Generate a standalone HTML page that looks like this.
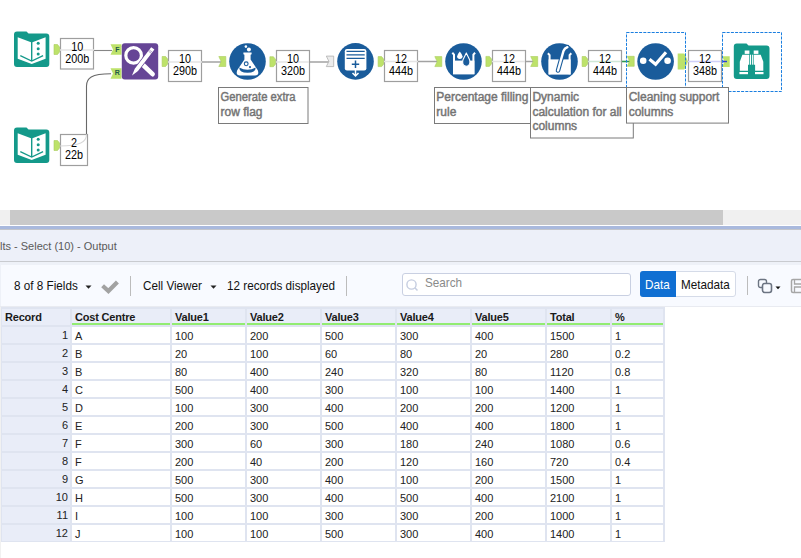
<!DOCTYPE html>
<html><head><meta charset="utf-8">
<style>
*{margin:0;padding:0;box-sizing:border-box}
html,body{width:801px;height:558px;overflow:hidden;background:#fff;font-family:"Liberation Sans",sans-serif;position:relative}
.a{position:absolute}
.tg{position:absolute;background:#dfe4f0}
.hc{position:absolute;height:16px;letter-spacing:-0.2px;background:#e9edf8;font-weight:bold;font-size:11px;color:#1a1a1a;padding-left:3px;line-height:16px;white-space:nowrap;overflow:hidden}
.gl{position:absolute;height:2px;background:#92ec72}
.rc{position:absolute;height:16px;background:#e9edf8;font-size:11px;color:#222;text-align:right;padding-right:2px;line-height:17px}
.tb{font-size:13px;transform:scaleX(0.9);transform-origin:0 0;color:#111;white-space:nowrap;line-height:14px}
.dc{position:absolute;height:16px;background:#fff;font-size:11px;color:#222;padding-left:3px;line-height:19px}
</style></head><body>
<svg class="a" style="left:0;top:0" width="801" height="210" viewBox="0 0 801 210">

<!-- connection lines -->
<path d="M94,50.5H112" stroke="#868686" stroke-width="1.1" fill="none"/>
<path d="M86.5,135V86C86.5,78 91,73.8 111,73.8" stroke="#686868" stroke-width="1.1" fill="none"/>
<g stroke="#a2a2a2" stroke-width="1.5" fill="none">
  <path d="M202,62H221"/>
  <path d="M309.5,62H329"/>
  <path d="M418,61.5H437"/>
  <path d="M525.5,61.5H533"/>
</g>
<path d="M621.5,61.5H630" stroke="#2e9a50" stroke-width="1.6"/>
<path d="M721.5,61.5H727" stroke="#3040d8" stroke-width="1.6"/>
<!-- input 1 -->
<g>
<path d="M14,34.5Q14,31.5 17,31.5H26.5L28.5,33.5H46.3Q49.3,33.5 49.3,36.5V64Q49.3,67 46.3,67H17Q14,67 14,64Z" fill="#14998a"/>
<path d="M17.7,37.2L31,42.3H32.4L45.6,37.2V58.7L31.7,64.1L17.7,58.7Z" fill="#fff"/>
<path d="M31.7,42V61" stroke="#14998a" stroke-width="1.4"/>
<path d="M20.3,55.6L31.7,61L43.1,55.6" stroke="#14998a" stroke-width="1.3" fill="none"/>
<circle cx="38.2" cy="43.3" r="1.5" fill="#14998a"/><circle cx="38.2" cy="48.7" r="1.5" fill="#14998a"/><circle cx="38.2" cy="54.1" r="1.5" fill="#14998a"/>
</g>
<g transform="translate(0,96)">
<path d="M14,34.5Q14,31.5 17,31.5H26.5L28.5,33.5H46.3Q49.3,33.5 49.3,36.5V64Q49.3,67 46.3,67H17Q14,67 14,64Z" fill="#14998a"/>
<path d="M17.7,37.2L31,42.3H32.4L45.6,37.2V58.7L31.7,64.1L17.7,58.7Z" fill="#fff"/>
<path d="M31.7,42V61" stroke="#14998a" stroke-width="1.4"/>
<path d="M20.3,55.6L31.7,61L43.1,55.6" stroke="#14998a" stroke-width="1.3" fill="none"/>
<circle cx="38.2" cy="43.3" r="1.5" fill="#14998a"/><circle cx="38.2" cy="48.7" r="1.5" fill="#14998a"/><circle cx="38.2" cy="54.1" r="1.5" fill="#14998a"/>
</g>
<g transform="translate(53.7,44.2)"><path d="M0.3,0.3H3.8L6,3V7.6L3.8,10.3H0.3Z" fill="#bde26a" stroke="#a9cd5e" stroke-width="0.6"/></g>
<g transform="translate(53.7,140.2)"><path d="M0.3,0.3H3.8L6,3V7.6L3.8,10.3H0.3Z" fill="#bde26a" stroke="#a9cd5e" stroke-width="0.6"/></g>

<!-- F / R anchors -->
<path d="M110.5,44.2H121.5V54.8H110.5L113,49.5Z" fill="#bde26a"/>
<path d="M110.5,68.2H121.5V78.8H110.5L113,73.5Z" fill="#bde26a"/>
<text x="117.3" y="52.2" font-family="Liberation Sans" font-weight="bold" font-size="7" fill="#1f5a48" text-anchor="middle">F</text>
<text x="117.3" y="75.2" font-family="Liberation Sans" font-weight="bold" font-size="7" fill="#1f5a48" text-anchor="middle">R</text>

<!-- select tool -->
<rect x="121.8" y="43.2" width="36.4" height="36.3" rx="3" fill="#664596"/>
<circle cx="133.6" cy="55.4" r="7.8" stroke="#fff" stroke-width="3.2" fill="none"/>
<path d="M140.5,62.5L152.6,74.2" stroke="#fff" stroke-width="4.6" stroke-linecap="round"/>
<path d="M154.4,49.6L151.2,47.2L134.8,68.7L132,75.6L138,71.1Z" fill="#fff" stroke="#664596" stroke-width="1.3" stroke-linejoin="round"/>
<path d="M154.4,49.6L151.2,47.2L134.8,68.7L132,75.6L138,71.1Z" fill="#fff"/>
<path d="M149.3,50L152.6,52.5M148.5,51.2L151.8,53.7" stroke="#664596" stroke-width="0.55"/>
<g transform="translate(161.8,56.2)"><path d="M0.3,0.3H3.8L6,3V7.6L3.8,10.3H0.3Z" fill="#bde26a" stroke="#a9cd5e" stroke-width="0.6"/></g>

<!-- formula -->
<g transform="translate(218.5,56.2)"><path d="M0.3,0.3H7.3V10.3H0.3L2.7,5.3Z" fill="#bde26a" stroke="#a9cd5e" stroke-width="0.6"/></g>
<circle cx="247.5" cy="61.5" r="18.3" fill="#1a5c9b"/>
<path d="M243.4,52.6H251.6V54.3L250.6,54.8V59.5L257.8,70.3Q259.6,75.6 255,75.6H240Q235.4,75.6 237.2,70.3L244.4,59.5V54.8L243.4,54.3Z" fill="#fff"/>
<path d="M239.2,67.4Q247.5,72 255.7,67.4Q255.6,72.8 247.5,72.8Q239.4,72.8 239.2,67.4Z" fill="#1a5c9b"/>
<circle cx="246.2" cy="63.8" r="1.9" stroke="#1a5c9b" stroke-width="1.1" fill="none"/>
<circle cx="250" cy="67.1" r="1.1" fill="#1a5c9b"/>
<circle cx="245.9" cy="46.6" r="1.3" fill="#fff"/>
<circle cx="248.9" cy="49.5" r="2" fill="#fff"/>
<g transform="translate(269.6,56.4)"><path d="M0.3,0.3H3.8L6,3V7.6L3.8,10.3H0.3Z" fill="#bde26a" stroke="#a9cd5e" stroke-width="0.6"/></g>

<!-- record id -->
<path d="M326.3,56.1H333.7V66.6H326.3L328.9,61.35Z" fill="#ececec" stroke="#b0b0b0" stroke-width="0.8"/>
<circle cx="355.5" cy="61.4" r="18.3" fill="#1a5c9b"/>
<rect x="344.8" y="49" width="21.6" height="21.4" rx="2.2" fill="#fff"/>
<g stroke="#1a5c9b" stroke-width="1.3"><path d="M346.5,51.3H364.7M346.5,54.8H364.7M346.5,58.4H364.7"/></g>
<path d="M355.5,60.6V68M351.8,64.3H359.2" stroke="#1a5c9b" stroke-width="1.5"/>
<path d="M355.5,70V76M352.5,73L355.5,76L358.5,73" stroke="#fff" stroke-width="1.5" fill="none"/>
<g transform="translate(377.8,56.3)"><path d="M0.3,0.3H3.8L6,3V7.6L3.8,10.3H0.3Z" fill="#bde26a" stroke="#a9cd5e" stroke-width="0.6"/></g>

<!-- percentage filling -->
<g transform="translate(434.5,56.3)"><path d="M0.3,0.3H7.3V10.3H0.3L2.7,5.3Z" fill="#bde26a" stroke="#a9cd5e" stroke-width="0.6"/></g>
<circle cx="463.5" cy="61.5" r="18.3" fill="#1a5c9b"/>
<path d="M452.3,52.8L454,54.6V74M475.1,52.8L473.4,54.6V74" stroke="#fff" stroke-width="2" fill="none"/>
<rect x="453" y="60.6" width="21.4" height="13.8" fill="#fff"/>
<path d="M459.8,51.4Q462.5,54.6 462.5,56.3A2.7,2.7 0 0 1 457.1,56.3Q457.1,54.6 459.8,51.4Z" fill="#fff"/>
<path d="M466.3,52.9L469.6,59.8Q470,61 469.9,62.6A3.6,3.6 0 0 1 462.7,62.6Q462.6,61 463,59.8Z" fill="#1a5c9b" stroke="#fff" stroke-width="1.1" stroke-linejoin="round"/>
<g transform="translate(485.6,56.1)"><path d="M0.3,0.3H3.8L6,3V7.6L3.8,10.3H0.3Z" fill="#bde26a" stroke="#a9cd5e" stroke-width="0.6"/></g>

<!-- dynamic calc -->
<g transform="translate(530.4,56.2)"><path d="M0.3,0.3H7.3V10.3H0.3L2.7,5.3Z" fill="#bde26a" stroke="#a9cd5e" stroke-width="0.6"/></g>
<circle cx="559.5" cy="61.5" r="18.3" fill="#1a5c9b"/>
<path d="M547.9,53.3L549.6,55.1V74.2M571.3,53.3L569.6,55.1V74.2" stroke="#fff" stroke-width="2" fill="none"/>
<rect x="548.6" y="59.4" width="22" height="15.2" fill="#fff"/>
<path d="M567.4,47.2Q564.5,48.5 563.5,51L558,70.5" stroke="#1a5c9b" stroke-width="4.6" fill="none" stroke-linecap="round"/>
<path d="M567.4,47.2Q564.5,48.5 563.5,51L558,70.5" stroke="#fff" stroke-width="2.4" fill="none" stroke-linecap="round"/>
<g transform="translate(581.8,56.2)"><path d="M0.3,0.3H3.8L6,3V7.6L3.8,10.3H0.3Z" fill="#bde26a" stroke="#a9cd5e" stroke-width="0.6"/></g>

<!-- cleaning -->
<g transform="translate(626.9,56)"><path d="M0.3,0.3H7.3V10.3H0.3L2.7,5.3Z" fill="#bde26a" stroke="#a9cd5e" stroke-width="0.6"/></g>
<circle cx="655.6" cy="61.5" r="18.3" fill="#1a5c9b"/>
<circle cx="643.2" cy="60.7" r="3.3" fill="#fff"/>
<circle cx="667.6" cy="60.7" r="3.3" fill="#fff"/>
<path d="M649.5,59.3L655.6,64.2L666,52.3" stroke="#fff" stroke-width="3.2" fill="none"/>
<path d="M677.7,53.6H683.5Q684.5,53.6 685.2,55L687.9,61.5L685.2,68Q684.5,69.5 683.5,69.5H677.7Z" fill="#bde26a"/>

<!-- browse -->
<path d="M722,56.3H729.7V66.9H722L724.6,61.6Z" fill="#bde26a"/>
<path d="M722,61.5H727" stroke="#3040d8" stroke-width="1.4"/>
<path d="M733.8,46.4Q733.8,43.4 736.8,43.4H746.5L748.5,45.6H766.5Q769.5,45.6 769.5,48.6V76.1Q769.5,79.1 766.5,79.1H736.8Q733.8,79.1 733.8,76.1Z" fill="#14998a"/>
<g fill="#fff">
<rect x="744.7" y="50.5" width="4.7" height="3.4"/><rect x="753.7" y="50.5" width="4.7" height="3.4"/>
<path d="M742.4,54.7H749.2V64.8H748V70.7H739.8V61.8Z"/>
<path d="M760.7,54.7H753.9V64.8H755.1V70.7H763.3V61.8Z"/>
<rect x="749.9" y="54.7" width="1.2" height="10"/><rect x="752.1" y="54.7" width="1.2" height="10"/>
<rect x="739.4" y="72" width="8.6" height="2.2"/><rect x="755" y="72" width="8.5" height="2.2"/>
</g>

<!-- count boxes -->
<g fill="#fff" stroke="#9e9e9e" stroke-width="1.2">
<rect x="60.5" y="38.5" width="33" height="30.5"/>
<rect x="60.5" y="134.5" width="27" height="31"/>
<rect x="168.5" y="50.5" width="33" height="31"/>
<rect x="276.5" y="50.5" width="33" height="31"/>
<rect x="384.5" y="50.5" width="33" height="31"/>
<rect x="492.5" y="50.5" width="33" height="31"/>
<rect x="588.5" y="50.5" width="33" height="31"/>
<rect x="688.5" y="50.5" width="33" height="31"/>
</g>
<!-- faint lines inside boxes -->
<g stroke="#e4e4e4" stroke-width="1.4">
 <path d="M60,50H94"/><path d="M168,62H202"/><path d="M276,62H309"/><path d="M384,61.5H418"/><path d="M492,61.5H525"/>
</g>
<path d="M588,61.5H621" stroke="#cfe8d6" stroke-width="1.4"/>
<path d="M60,146C80,146 86.5,142 86.5,134.5" stroke="#d8d8d8" stroke-width="1.1" fill="none"/>
<path d="M688,61.5H721" stroke="#d0d0f8" stroke-width="1.4"/>

<g font-family="Liberation Sans" font-size="12" fill="#000" text-anchor="middle">
<g transform="translate(77.2,0) scale(0.9,1)"><text x="0" y="50.8">10</text><text x="0" y="62.7">200b</text></g>
<g transform="translate(74,0) scale(0.9,1)"><text x="0" y="147">2</text><text x="0" y="158.8">22b</text></g>
<g transform="translate(185,0) scale(0.9,1)"><text x="0" y="63">10</text><text x="0" y="74.7">290b</text></g>
<g transform="translate(293,0) scale(0.9,1)"><text x="0" y="63">10</text><text x="0" y="74.7">320b</text></g>
<g transform="translate(401,0) scale(0.9,1)"><text x="0" y="63">12</text><text x="0" y="75">444b</text></g>
<g transform="translate(509,0) scale(0.9,1)"><text x="0" y="63">12</text><text x="0" y="75">444b</text></g>
<g transform="translate(605,0) scale(0.9,1)"><text x="0" y="63">12</text><text x="0" y="75">444b</text></g>
<g transform="translate(705,0) scale(0.9,1)"><text x="0" y="63">12</text><text x="0" y="75">348b</text></g>
</g>

<!-- selection dashed -->
<g fill="none" stroke="#1b7fe0" stroke-width="1" stroke-dasharray="3,1.2">
<rect x="626.5" y="32.5" width="59" height="59"/>
<rect x="722.5" y="32.5" width="59" height="59"/>
</g>
<!-- labels -->
<g font-family="Liberation Sans" font-size="12" fill="#747474">
<rect x="218.5" y="87.5" width="89.5" height="36" fill="#fff" stroke="#7a7a7a"/>
<g stroke="#747474" stroke-width="0.45"><text x="220.5" y="100.8" textLength="75" lengthAdjust="spacingAndGlyphs">Generate extra</text><text x="220.5" y="115.8">row flag</text></g>
<rect x="434.5" y="87.5" width="96" height="36" fill="#fff" stroke="#7a7a7a"/>
<g stroke="#747474" stroke-width="0.45"><text x="436.3" y="101">Percentage filling</text><text x="436.3" y="116">rule</text></g>
<rect x="530.5" y="87.5" width="102.8" height="50.5" fill="#fff" stroke="#7a7a7a"/>
<g stroke="#747474" stroke-width="0.45"><text x="532.4" y="101">Dynamic</text><text x="532.4" y="116">calculation for all</text><text x="532.4" y="130.2">columns</text></g>
<rect x="626.5" y="87.5" width="102" height="35.6" fill="#fff" stroke="#7a7a7a"/>
<g stroke="#747474" stroke-width="0.45"><text x="628.7" y="101.2">Cleaning support</text><text x="628.7" y="116">columns</text></g>
</g>
</svg>

<!-- scrollbar -->
<div class="a" style="left:0;top:210px;width:801px;height:15px;background:#f0f0f0"></div>
<div class="a" style="left:10px;top:210px;width:713px;height:15px;background:#c9c9c9"></div>
<!-- panel -->
<div class="a" style="left:0;top:226px;width:801px;height:3px;background:#a9b9dd"></div>
<div class="a" style="left:0;top:229px;width:801px;height:1px;background:#c3c5cb"></div>
<div class="a" style="left:0;top:230px;width:801px;height:31px;background:#edf0f9"></div>
<div class="a" style="left:0;top:261px;width:801px;height:1px;background:#c9cbd0"></div>
<div class="a" style="left:0;top:262px;width:801px;height:296px;background:#eef1f8"></div>
<div class="a" style="left:0;top:239px;font-size:11px;line-height:14px;color:#5a5a5a;white-space:nowrap">lts - Select (10) - Output</div>
<!-- toolbar -->
<div class="a" style="left:1px;top:265px;width:800px;height:41px;background:#f8faff"></div>
<div class="a" style="left:0;top:306px;width:801px;height:1px;background:#e9ebf1"></div>
<div class="a" style="left:0;top:307px;width:801px;height:251px;background:#fff"></div>
<div class="a tb" style="left:14px;top:279px">8 of 8 Fields</div>
<svg class="a" style="left:85px;top:285px" width="8" height="5"><path d="M0.5,0.5H6.5L3.5,3.8Z" fill="#222"/></svg>
<svg class="a" style="left:101px;top:278px" width="19" height="16"><path d="M1.6,7.8L7.4,13L16.4,4" stroke="#a2a2a2" stroke-width="4.2" fill="none"/></svg>
<div class="a" style="left:130px;top:276px;width:1px;height:20px;background:#bcbcbc"></div>
<div class="a tb" style="left:143px;top:279px">Cell Viewer</div>
<svg class="a" style="left:210px;top:285px" width="8" height="5"><path d="M0.5,0.5H6.5L3.5,3.8Z" fill="#222"/></svg>
<div class="a tb" style="left:227px;top:279px">12 records displayed</div>
<div class="a" style="left:346px;top:276px;width:1px;height:20px;background:#bcbcbc"></div>
<div class="a" style="left:402px;top:273px;width:229px;height:23px;background:#fff;border:1px solid #c9d0e2;border-radius:3px"></div>
<svg class="a" style="left:404px;top:277px" width="16" height="16"><circle cx="7.5" cy="7.5" r="4.6" stroke="#c5cde0" stroke-width="1.4" fill="none"/><path d="M10.8,10.8L13.5,13.5" stroke="#c5cde0" stroke-width="1.5"/></svg>
<div class="a tb" style="left:425px;top:276px;color:#8a8a8a">Search</div>
<div class="a" style="left:640px;top:271px;width:96px;height:26px;border:1px solid #d5dbe8;border-radius:3px;background:#fff"></div>
<div class="a" style="left:640px;top:271px;width:36px;height:26px;background:#106fd2;border-radius:3px 0 0 3px"></div>
<div class="a tb" style="left:645px;top:278px;color:#fff">Data</div>
<div class="a tb" style="left:681px;top:278px;color:#111">Metadata</div>
<div class="a" style="left:747px;top:276px;width:1px;height:19px;background:#bcbcbc"></div>
<svg class="a" style="left:757px;top:278px" width="30" height="16"><rect x="1.5" y="1.5" width="8" height="8" rx="2" stroke="#6c7482" stroke-width="1.4" fill="none"/><rect x="5.5" y="5.5" width="9" height="9" rx="2.2" stroke="#6c7482" stroke-width="1.6" fill="#f8faff"/><path d="M18.5,8.5H23.5L21,11.3Z" fill="#111"/></svg>
<svg class="a" style="left:790px;top:278px" width="11" height="16"><rect x="1.5" y="1.5" width="13" height="13" rx="1.5" stroke="#a6a6a6" stroke-width="1.5" fill="none"/><path d="M4.5,2V6H12V2M4.5,14V9H12V14" stroke="#a6a6a6" stroke-width="1.3" fill="none"/></svg>
<div class="tg" style="left:1px;top:307px;width:664px;height:235px"></div>
<div class="a" style="left:0;top:307px;width:1px;height:251px;background:#f1f1f1"></div>
<div class="hc" style="left:2px;top:309px;width:68px"><span>Record</span></div>
<div class="hc" style="left:72px;top:309px;width:98px"><span>Cost Centre</span></div>
<div class="gl" style="left:72px;top:323px;width:98px"></div>
<div class="hc" style="left:172px;top:309px;width:73px"><span>Value1</span></div>
<div class="gl" style="left:172px;top:323px;width:73px"></div>
<div class="hc" style="left:247px;top:309px;width:73px"><span>Value2</span></div>
<div class="gl" style="left:247px;top:323px;width:73px"></div>
<div class="hc" style="left:322px;top:309px;width:73px"><span>Value3</span></div>
<div class="gl" style="left:322px;top:323px;width:73px"></div>
<div class="hc" style="left:397px;top:309px;width:73px"><span>Value4</span></div>
<div class="gl" style="left:397px;top:323px;width:73px"></div>
<div class="hc" style="left:472px;top:309px;width:73px"><span>Value5</span></div>
<div class="gl" style="left:472px;top:323px;width:73px"></div>
<div class="hc" style="left:547px;top:309px;width:63px"><span>Total</span></div>
<div class="gl" style="left:547px;top:323px;width:63px"></div>
<div class="hc" style="left:612px;top:309px;width:51px"><span>%</span></div>
<div class="gl" style="left:612px;top:323px;width:51px"></div>
<div class="rc" style="left:2px;top:327px;width:68px"><span>1</span></div>
<div class="dc" style="left:72px;top:327px;width:98px"><span>A</span></div>
<div class="dc" style="left:172px;top:327px;width:73px"><span>100</span></div>
<div class="dc" style="left:247px;top:327px;width:73px"><span>200</span></div>
<div class="dc" style="left:322px;top:327px;width:73px"><span>500</span></div>
<div class="dc" style="left:397px;top:327px;width:73px"><span>300</span></div>
<div class="dc" style="left:472px;top:327px;width:73px"><span>400</span></div>
<div class="dc" style="left:547px;top:327px;width:63px"><span>1500</span></div>
<div class="dc" style="left:612px;top:327px;width:51px"><span>1</span></div>
<div class="rc" style="left:2px;top:345px;width:68px"><span>2</span></div>
<div class="dc" style="left:72px;top:345px;width:98px"><span>B</span></div>
<div class="dc" style="left:172px;top:345px;width:73px"><span>20</span></div>
<div class="dc" style="left:247px;top:345px;width:73px"><span>100</span></div>
<div class="dc" style="left:322px;top:345px;width:73px"><span>60</span></div>
<div class="dc" style="left:397px;top:345px;width:73px"><span>80</span></div>
<div class="dc" style="left:472px;top:345px;width:73px"><span>20</span></div>
<div class="dc" style="left:547px;top:345px;width:63px"><span>280</span></div>
<div class="dc" style="left:612px;top:345px;width:51px"><span>0.2</span></div>
<div class="rc" style="left:2px;top:363px;width:68px"><span>3</span></div>
<div class="dc" style="left:72px;top:363px;width:98px"><span>B</span></div>
<div class="dc" style="left:172px;top:363px;width:73px"><span>80</span></div>
<div class="dc" style="left:247px;top:363px;width:73px"><span>400</span></div>
<div class="dc" style="left:322px;top:363px;width:73px"><span>240</span></div>
<div class="dc" style="left:397px;top:363px;width:73px"><span>320</span></div>
<div class="dc" style="left:472px;top:363px;width:73px"><span>80</span></div>
<div class="dc" style="left:547px;top:363px;width:63px"><span>1120</span></div>
<div class="dc" style="left:612px;top:363px;width:51px"><span>0.8</span></div>
<div class="rc" style="left:2px;top:381px;width:68px"><span>4</span></div>
<div class="dc" style="left:72px;top:381px;width:98px"><span>C</span></div>
<div class="dc" style="left:172px;top:381px;width:73px"><span>500</span></div>
<div class="dc" style="left:247px;top:381px;width:73px"><span>400</span></div>
<div class="dc" style="left:322px;top:381px;width:73px"><span>300</span></div>
<div class="dc" style="left:397px;top:381px;width:73px"><span>100</span></div>
<div class="dc" style="left:472px;top:381px;width:73px"><span>100</span></div>
<div class="dc" style="left:547px;top:381px;width:63px"><span>1400</span></div>
<div class="dc" style="left:612px;top:381px;width:51px"><span>1</span></div>
<div class="rc" style="left:2px;top:399px;width:68px"><span>5</span></div>
<div class="dc" style="left:72px;top:399px;width:98px"><span>D</span></div>
<div class="dc" style="left:172px;top:399px;width:73px"><span>100</span></div>
<div class="dc" style="left:247px;top:399px;width:73px"><span>300</span></div>
<div class="dc" style="left:322px;top:399px;width:73px"><span>400</span></div>
<div class="dc" style="left:397px;top:399px;width:73px"><span>200</span></div>
<div class="dc" style="left:472px;top:399px;width:73px"><span>200</span></div>
<div class="dc" style="left:547px;top:399px;width:63px"><span>1200</span></div>
<div class="dc" style="left:612px;top:399px;width:51px"><span>1</span></div>
<div class="rc" style="left:2px;top:417px;width:68px"><span>6</span></div>
<div class="dc" style="left:72px;top:417px;width:98px"><span>E</span></div>
<div class="dc" style="left:172px;top:417px;width:73px"><span>200</span></div>
<div class="dc" style="left:247px;top:417px;width:73px"><span>300</span></div>
<div class="dc" style="left:322px;top:417px;width:73px"><span>500</span></div>
<div class="dc" style="left:397px;top:417px;width:73px"><span>400</span></div>
<div class="dc" style="left:472px;top:417px;width:73px"><span>400</span></div>
<div class="dc" style="left:547px;top:417px;width:63px"><span>1800</span></div>
<div class="dc" style="left:612px;top:417px;width:51px"><span>1</span></div>
<div class="rc" style="left:2px;top:435px;width:68px"><span>7</span></div>
<div class="dc" style="left:72px;top:435px;width:98px"><span>F</span></div>
<div class="dc" style="left:172px;top:435px;width:73px"><span>300</span></div>
<div class="dc" style="left:247px;top:435px;width:73px"><span>60</span></div>
<div class="dc" style="left:322px;top:435px;width:73px"><span>300</span></div>
<div class="dc" style="left:397px;top:435px;width:73px"><span>180</span></div>
<div class="dc" style="left:472px;top:435px;width:73px"><span>240</span></div>
<div class="dc" style="left:547px;top:435px;width:63px"><span>1080</span></div>
<div class="dc" style="left:612px;top:435px;width:51px"><span>0.6</span></div>
<div class="rc" style="left:2px;top:453px;width:68px"><span>8</span></div>
<div class="dc" style="left:72px;top:453px;width:98px"><span>F</span></div>
<div class="dc" style="left:172px;top:453px;width:73px"><span>200</span></div>
<div class="dc" style="left:247px;top:453px;width:73px"><span>40</span></div>
<div class="dc" style="left:322px;top:453px;width:73px"><span>200</span></div>
<div class="dc" style="left:397px;top:453px;width:73px"><span>120</span></div>
<div class="dc" style="left:472px;top:453px;width:73px"><span>160</span></div>
<div class="dc" style="left:547px;top:453px;width:63px"><span>720</span></div>
<div class="dc" style="left:612px;top:453px;width:51px"><span>0.4</span></div>
<div class="rc" style="left:2px;top:471px;width:68px"><span>9</span></div>
<div class="dc" style="left:72px;top:471px;width:98px"><span>G</span></div>
<div class="dc" style="left:172px;top:471px;width:73px"><span>500</span></div>
<div class="dc" style="left:247px;top:471px;width:73px"><span>300</span></div>
<div class="dc" style="left:322px;top:471px;width:73px"><span>400</span></div>
<div class="dc" style="left:397px;top:471px;width:73px"><span>100</span></div>
<div class="dc" style="left:472px;top:471px;width:73px"><span>200</span></div>
<div class="dc" style="left:547px;top:471px;width:63px"><span>1500</span></div>
<div class="dc" style="left:612px;top:471px;width:51px"><span>1</span></div>
<div class="rc" style="left:2px;top:489px;width:68px"><span>10</span></div>
<div class="dc" style="left:72px;top:489px;width:98px"><span>H</span></div>
<div class="dc" style="left:172px;top:489px;width:73px"><span>500</span></div>
<div class="dc" style="left:247px;top:489px;width:73px"><span>300</span></div>
<div class="dc" style="left:322px;top:489px;width:73px"><span>400</span></div>
<div class="dc" style="left:397px;top:489px;width:73px"><span>500</span></div>
<div class="dc" style="left:472px;top:489px;width:73px"><span>400</span></div>
<div class="dc" style="left:547px;top:489px;width:63px"><span>2100</span></div>
<div class="dc" style="left:612px;top:489px;width:51px"><span>1</span></div>
<div class="rc" style="left:2px;top:507px;width:68px"><span>11</span></div>
<div class="dc" style="left:72px;top:507px;width:98px"><span>I</span></div>
<div class="dc" style="left:172px;top:507px;width:73px"><span>100</span></div>
<div class="dc" style="left:247px;top:507px;width:73px"><span>100</span></div>
<div class="dc" style="left:322px;top:507px;width:73px"><span>300</span></div>
<div class="dc" style="left:397px;top:507px;width:73px"><span>300</span></div>
<div class="dc" style="left:472px;top:507px;width:73px"><span>200</span></div>
<div class="dc" style="left:547px;top:507px;width:63px"><span>1000</span></div>
<div class="dc" style="left:612px;top:507px;width:51px"><span>1</span></div>
<div class="rc" style="left:2px;top:525px;width:68px"><span>12</span></div>
<div class="dc" style="left:72px;top:525px;width:98px"><span>J</span></div>
<div class="dc" style="left:172px;top:525px;width:73px"><span>100</span></div>
<div class="dc" style="left:247px;top:525px;width:73px"><span>100</span></div>
<div class="dc" style="left:322px;top:525px;width:73px"><span>500</span></div>
<div class="dc" style="left:397px;top:525px;width:73px"><span>300</span></div>
<div class="dc" style="left:472px;top:525px;width:73px"><span>400</span></div>
<div class="dc" style="left:547px;top:525px;width:63px"><span>1400</span></div>
<div class="dc" style="left:612px;top:525px;width:51px"><span>1</span></div>
</body></html>
